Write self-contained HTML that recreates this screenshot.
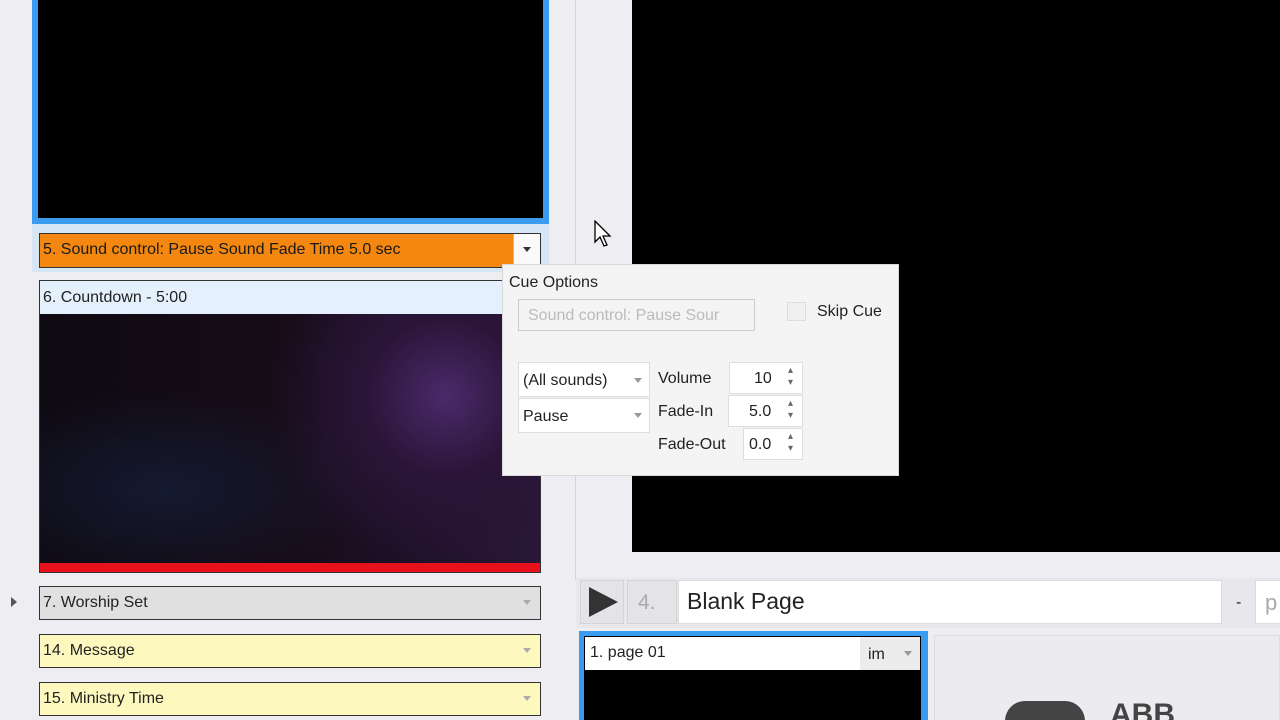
<!DOCTYPE html>
<html><head><meta charset="utf-8"><style>
*{box-sizing:border-box;margin:0;padding:0}
html,body{width:1280px;height:720px;overflow:hidden}
body{background:#eeeef2;font-family:"Segoe UI","Liberation Sans",sans-serif;position:relative}
.a{position:absolute}
.t{font-size:16px;color:#222;white-space:nowrap}
.dd{position:absolute;width:0;height:0;border-left:4px solid transparent;border-right:4px solid transparent;border-top:5px solid #888}
</style></head><body>
<div class="a" style="left:32px;top:0;width:517px;height:224px;background:#3a9cf0"></div>
<div class="a" style="left:38px;top:0;width:505px;height:218px;background:#000"></div>
<div class="a" style="left:32px;top:224px;width:517px;height:48px;background:#d6e6f4"></div>
<div class="a" style="left:39px;top:233px;width:502px;height:35px;background:#f3870f;border:1px solid #333"></div>
<div class="a t" style="left:43px;top:241px;color:#1a1a1a">5. Sound control: Pause Sound Fade Time 5.0 sec</div>
<div class="a" style="left:513px;top:234px;width:27px;height:33px;background:#fafafa;border-left:1px solid #bbb"></div>
<div class="dd" style="left:523px;top:247px;border-top-color:#333"></div>
<div class="a" style="left:39px;top:280px;width:502px;height:293px;border:1px solid #333;background:#e4f0fb"></div>
<div class="a t" style="left:43px;top:289px">6. Countdown - 5:00</div>
<div class="a" style="left:40px;top:314px;width:500px;height:250px;background:radial-gradient(circle at 81% 33%,#4a2a6a 0%,#2a1538 18%,transparent 40%),radial-gradient(ellipse at 25% 70%,#141a30 0%,transparent 40%),linear-gradient(90deg,#0e0a12,#170c18 50%,#1f1028 75%,#2a1838)"></div>
<div class="a" style="left:40px;top:563px;width:500px;height:9px;background:#e8101a"></div>
<div class="a" style="left:11px;top:597px;width:0;height:0;border-top:5px solid transparent;border-bottom:5px solid transparent;border-left:6px solid #555"></div>
<div class="a" style="left:39px;top:586px;width:502px;height:34px;background:#e0e0e0;border:1px solid #333"></div>
<div class="a t" style="left:43px;top:594px">7. Worship Set</div>
<div class="dd" style="left:523px;top:600px;border-top-color:#aaa"></div>
<div class="a" style="left:39px;top:634px;width:502px;height:34px;background:#fdf8be;border:1px solid #333"></div>
<div class="a t" style="left:43px;top:642px">14. Message</div>
<div class="dd" style="left:523px;top:648px;border-top-color:#aaa"></div>
<div class="a" style="left:39px;top:682px;width:502px;height:34px;background:#fdf8be;border:1px solid #333"></div>
<div class="a t" style="left:43px;top:690px">15. Ministry Time</div>
<div class="dd" style="left:523px;top:696px;border-top-color:#aaa"></div>
<div class="a" style="left:575px;top:0;width:1px;height:580px;background:#d4d4d8"></div>
<div class="a" style="left:632px;top:0;width:648px;height:552px;background:#000"></div>
<svg class="a" style="left:594px;top:220px" width="20" height="30" viewBox="0 0 20 30"><path d="M1 1 L1 22 L6 17 L10 26 L13 25 L9 16 L16 16 Z" fill="#fff" stroke="#000" stroke-width="1.3"/></svg>
<div class="a" style="left:502px;top:264px;width:397px;height:212px;background:#f4f4f4;border:1px solid #d8d8d8"></div>
<div class="a t" style="left:509px;top:274px">Cue Options</div>
<div class="a" style="left:518px;top:299px;width:237px;height:32px;border:1px solid #ccc;background:#f4f4f4"></div>
<div class="a t" style="left:528px;top:307px;color:#bbb;width:222px;overflow:hidden">Sound control: Pause Sour</div>
<div class="a" style="left:787px;top:302px;width:19px;height:19px;border:1px solid #ddd;background:#f0f0f0"></div>
<div class="a t" style="left:817px;top:303px">Skip Cue</div>
<div class="a" style="left:518px;top:362px;width:132px;height:35px;border:1px solid #ddd;background:#fff"></div>
<div class="a t" style="left:523px;top:372px">(All sounds)</div>
<div class="dd" style="left:634px;top:378px;border-top-color:#999"></div>
<div class="a" style="left:518px;top:398px;width:132px;height:35px;border:1px solid #ddd;background:#fff"></div>
<div class="a t" style="left:523px;top:408px">Pause</div>
<div class="dd" style="left:634px;top:413px;border-top-color:#999"></div>
<div class="a t" style="left:658px;top:370px">Volume</div>
<div class="a t" style="left:658px;top:403px">Fade-In</div>
<div class="a t" style="left:658px;top:436px">Fade-Out</div>
<div class="a" style="left:729px;top:362px;width:74px;height:32px;border:1px solid #ddd;background:#fff"></div>
<div class="a t" style="left:754px;top:370px">10</div>
<div class="a" style="left:728px;top:395px;width:75px;height:32px;border:1px solid #ddd;background:#fff"></div>
<div class="a t" style="left:749px;top:403px">5.0</div>
<div class="a" style="left:743px;top:428px;width:60px;height:32px;border:1px solid #ddd;background:#fff"></div>
<div class="a t" style="left:749px;top:436px">0.0</div>
<div class="a" style="left:788px;top:365px;font-size:10px;color:#666;line-height:12px">▴<br>▾</div>
<div class="a" style="left:788px;top:398px;font-size:10px;color:#666;line-height:12px">▴<br>▾</div>
<div class="a" style="left:788px;top:431px;font-size:10px;color:#666;line-height:12px">▴<br>▾</div>
<div class="a" style="left:576px;top:578px;width:704px;height:50px;background:#e8e8ec"></div>
<div class="a" style="left:580px;top:580px;width:44px;height:44px;background:#e4e4e8;border:1px solid #d4d4d8"></div>
<div class="a" style="left:589px;top:587px;width:0;height:0;border-top:15px solid transparent;border-bottom:15px solid transparent;border-left:29px solid #333"></div>
<div class="a" style="left:627px;top:580px;width:50px;height:44px;background:#e4e4e8;border:1px solid #d4d4d8"></div>
<div class="a" style="left:638px;top:591px;font-size:21px;color:#aaa">4.</div>
<div class="a" style="left:678px;top:580px;width:544px;height:44px;background:#fff;border:1px solid #ddd"></div>
<div class="a" style="left:687px;top:588px;font-size:23px;color:#222">Blank Page</div>
<div class="a t" style="left:1236px;top:594px">-</div>
<div class="a" style="left:1255px;top:580px;width:25px;height:44px;background:#fff;border:1px solid #ddd;border-right:none"></div>
<div class="a" style="left:1265px;top:590px;font-size:22px;color:#aaa">p</div>
<div class="a" style="left:579px;top:631px;width:349px;height:89px;background:#3a9cf0"></div>
<div class="a" style="left:584px;top:636px;width:337px;height:84px;background:#000"></div>
<div class="a" style="left:585px;top:637px;width:335px;height:33px;background:#fff"></div>
<div class="a t" style="left:590px;top:644px">1. page 01</div>
<div class="a" style="left:860px;top:637px;width:60px;height:33px;background:#ececec"></div>
<div class="a t" style="left:868px;top:646px">im</div>
<div class="dd" style="left:904px;top:651px;border-top-color:#999"></div>
<div class="a" style="left:934px;top:635px;width:346px;height:85px;background:#ececf0;border:1px solid #ddd;border-bottom:none;overflow:hidden">
<div class="a" style="left:70px;top:65px;width:80px;height:20px;border-radius:40px 40px 0 0;background:#444"></div>
<div class="a" style="left:175px;top:62px;height:23px;overflow:hidden;font-size:30px;line-height:34px;font-weight:bold;color:#444">ABB</div>
</div>
</body></html>
